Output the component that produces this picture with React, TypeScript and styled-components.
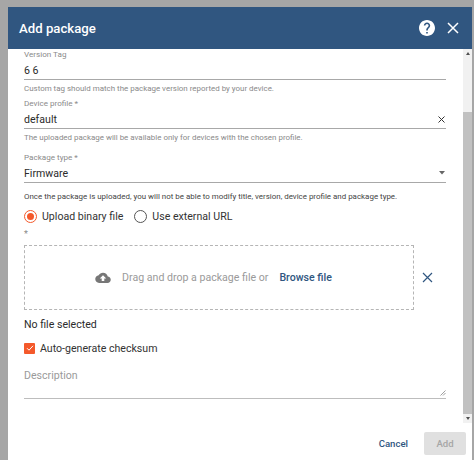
import styled, { createGlobalStyle } from "styled-components";

const Global = createGlobalStyle`
  html, body {
    margin: 0;
    height: 100%;
    overflow: hidden;
    background: #a6a6a6;
    font-family: Roboto, "Liberation Sans", sans-serif;
  }
`;

const Page = styled.div`
  width: 474px;
  height: 460px;
  padding: 7px 2px 0 8px;
  box-sizing: border-box;
  overflow: hidden;
`;

const Dialog = styled.div`
  width: 464px;
  height: 460px;
  background: #fff;
  border-radius: 3px 3px 0 0;
  display: flex;
  flex-direction: column;
`;

const Header = styled.div`
  height: 42px;
  flex: none;
  background: #305680;
  color: #fff;
  display: flex;
  align-items: center;
  padding: 0 11px;
`;

const Title = styled.h2`
  margin: 0;
  flex: 1;
  font-size: 13.2px;
  font-weight: 500;
`;

const HeaderIcon = styled.svg`
  display: block;
  margin-left: 10px;
`;

const Middle = styled.div`
  height: 374px;
  flex: none;
  display: flex;
`;

const Content = styled.div`
  flex: 1;
  overflow: hidden;
  padding: 0 17px 0 16px;
`;

const Label = styled.div<{ $gap?: number }>`
  font-size: 8.1px;
  line-height: 11px;
  color: #8a8a8a;
  margin-top: ${props => props.$gap ?? 0}px;
`;

const Field = styled.div`
  height: 18px;
  box-sizing: border-box;
  padding-bottom: 1px;
  margin-top: 2px;
  border-bottom: 1px solid #a8a8a8;
  display: flex;
  align-items: center;
  justify-content: space-between;
  font-size: 10.6px;
  color: #2b2b2b;
`;

const Hint = styled.div<{ $dark?: boolean; $gap?: number }>`
  font-size: 7.95px;
  line-height: 11px;
  color: ${props => (props.$dark ? "#444" : "#8a8a8a")};
  margin-top: ${props => props.$gap ?? 3}px;
`;

const RadioRow = styled.div`
  display: flex;
  align-items: center;
  height: 16px;
  margin-top: 6px;
  font-size: 10.6px;
  color: #333;
`;

const RadioCircle = styled.span<{ $on?: boolean }>`
  width: 13px;
  height: 13px;
  box-sizing: border-box;
  border-radius: 50%;
  border: 1.2px solid ${props => (props.$on ? "#f4592b" : "#555")};
  display: flex;
  align-items: center;
  justify-content: center;
  margin-right: 5px;
  &::after {
    content: "";
    width: 7px;
    height: 7px;
    border-radius: 50%;
    background: ${props => (props.$on ? "#f4592b" : "transparent")};
  }
`;

const RadioText = styled.span`
  margin-right: 11px;
`;

const Star = styled.div`
  font-size: 9px;
  line-height: 11px;
  color: #8a8a8a;
  margin-top: 5px;
`;

const DropRow = styled.div`
  display: flex;
  align-items: center;
  margin-top: 5px;
`;

const DropZone = styled.div`
  width: 390px;
  height: 65px;
  box-sizing: border-box;
  border: 1px dashed #b5b5b5;
  padding-right: 11px;
  display: flex;
  align-items: center;
  justify-content: center;
  font-size: 10.6px;
  color: #9a9a9a;
`;

const CloudIcon = styled.svg`
  display: block;
  margin-right: 11px;
`;

const Browse = styled.span`
  color: #305680;
  font-weight: 500;
  margin-left: 11px;
`;

const RemoveIcon = styled.svg`
  display: block;
  margin-left: 8px;
`;

const NoFile = styled.div`
  margin-top: 8px;
  font-size: 10.6px;
  line-height: 13px;
  color: #2b2b2b;
`;

const CheckRow = styled.div`
  display: flex;
  align-items: center;
  margin-top: 10px;
  height: 14px;
  font-size: 10.6px;
  color: #333;
`;

const CheckBox = styled.span`
  width: 11px;
  height: 11px;
  background: #f4592b;
  border-radius: 1px;
  display: flex;
  align-items: center;
  justify-content: center;
  margin-right: 5px;
`;

const TextArea = styled.div`
  height: 29px;
  margin-top: 14px;
  border-bottom: 1.5px solid #bdbdbd;
  font-size: 10.6px;
  line-height: 13px;
  color: #9a9a9a;
  display: flex;
  justify-content: space-between;
  align-items: flex-start;
`;

const ResizeGrip = styled.svg`
  align-self: flex-end;
  display: block;
  margin-bottom: 2px;
`;

const Scrollbar = styled.div`
  width: 9px;
  flex: none;
  background: #f1f1f1;
  display: flex;
  flex-direction: column;
`;

const ScrollArrow = styled.div<{ $down?: boolean }>`
  height: 9px;
  flex: none;
  display: flex;
  align-items: center;
  justify-content: center;
  &::after {
    content: "";
    border-left: 2.5px solid transparent;
    border-right: 2.5px solid transparent;
    border-${props => (props.$down ? "top" : "bottom")}: 3px solid #505050;
  }
`;

const ScrollTrack = styled.div`
  flex: 1;
  display: flex;
  flex-direction: column;
  justify-content: flex-end;
`;

const ScrollThumb = styled.div`
  height: 302px;
  background: #c1c1c1;
`;

const Actions = styled.div`
  display: flex;
  justify-content: flex-end;
  align-items: center;
  height: 40px;
  padding-right: 6px;
  font-size: 9.6px;
  font-weight: 500;
`;

const CancelButton = styled.button`
  border: 0;
  background: none;
  padding: 0;
  font: inherit;
  color: #305680;
  margin-right: 16px;
`;

const AddButton = styled.button`
  width: 42px;
  height: 23px;
  border: 0;
  border-radius: 2px;
  background: #e0e0e0;
  color: #a6a6a6;
  font: inherit;
`;

export default function App() {
  return (
    <Page>
      <Global />
      <Dialog>
        <Header>
          <Title>Add package</Title>
          <HeaderIcon width="16" height="16" viewBox="2 2 20 20">
            <path fill="#fff" d="M12 2C6.48 2 2 6.48 2 12s4.48 10 10 10 10-4.48 10-10S17.52 2 12 2zm1 17h-2v-2h2v2zm2.07-7.75-.9.92C13.45 12.9 13 13.5 13 15h-2v-.5c0-1.1.45-2.1 1.17-2.83l1.24-1.26c.37-.36.59-.86.59-1.41 0-1.1-.9-2-2-2s-2 .9-2 2H8c0-2.21 1.79-4 4-4s4 1.79 4 4c0 .88-.36 1.68-.93 2.25z" />
          </HeaderIcon>
          <HeaderIcon width="16" height="16" viewBox="0 0 16 16">
            <path stroke="#fff" strokeWidth="1.5" d="M3 3l10 10M13 3L3 13" />
          </HeaderIcon>
        </Header>
        <Middle>
          <Content>
            <Label>Version Tag</Label>
            <Field>6 6</Field>
            <Hint>Custom tag should match the package version reported by your device.</Hint>
            <Label $gap={4}>Device profile *</Label>
            <Field>
              default
              <svg width="9" height="9" viewBox="0 0 9 9">
                <path stroke="#333" strokeWidth="1" d="M1.5 1.5l6 6M7.5 1.5l-6 6" />
              </svg>
            </Field>
            <Hint>The uploaded package will be available only for devices with the chosen profile.</Hint>
            <Label $gap={9}>Package type *</Label>
            <Field>
              Firmware
              <svg width="8" height="4" viewBox="0 0 8 4">
                <path fill="#666" d="M1 0h6L4 3.5z" />
              </svg>
            </Field>
            <Hint $dark $gap={8}>Once the package is uploaded, you will not be able to modify title, version, device profile and package type.</Hint>
            <RadioRow>
              <RadioCircle $on />
              <RadioText>Upload binary file</RadioText>
              <RadioCircle />
              <RadioText>Use external URL</RadioText>
            </RadioRow>
            <Star>*</Star>
            <DropRow>
              <DropZone>
                <CloudIcon width="16" height="11" viewBox="0 3 24 17">
                  <path fill="#777" d="M19.35 10.04C18.67 6.59 15.64 4 12 4 9.11 4 6.6 5.64 5.35 8.04 2.34 8.36 0 10.91 0 14c0 3.31 2.69 6 6 6h13c2.76 0 5-2.24 5-5 0-2.64-2.05-4.78-4.65-4.96zM14 13v4h-4v-4H7l5-5 5 5h-3z" />
                </CloudIcon>
                Drag and drop a package file or
                <Browse>Browse file</Browse>
              </DropZone>
              <RemoveIcon width="11" height="11" viewBox="0 0 11 11">
                <path stroke="#305680" strokeWidth="1.2" d="M1 1l9 9M10 1l-9 9" />
              </RemoveIcon>
            </DropRow>
            <NoFile>No file selected</NoFile>
            <CheckRow>
              <CheckBox>
                <svg width="8" height="8" viewBox="0 0 8 8">
                  <path fill="none" stroke="#fff" strokeWidth="1" d="M1 4.2l2 2 4-4.4" />
                </svg>
              </CheckBox>
              Auto-generate checksum
            </CheckRow>
            <TextArea>
              Description
              <ResizeGrip width="6" height="6" viewBox="0 0 6 6">
                <path stroke="#777" strokeWidth="0.7" d="M0.5 5.5l5-5M3 5.5l2.5-2.5" />
              </ResizeGrip>
            </TextArea>
          </Content>
          <Scrollbar>
            <ScrollArrow />
            <ScrollTrack>
              <ScrollThumb />
            </ScrollTrack>
            <ScrollArrow $down />
          </Scrollbar>
        </Middle>
        <Actions>
          <CancelButton>Cancel</CancelButton>
          <AddButton>Add</AddButton>
        </Actions>
      </Dialog>
    </Page>
  );
}
